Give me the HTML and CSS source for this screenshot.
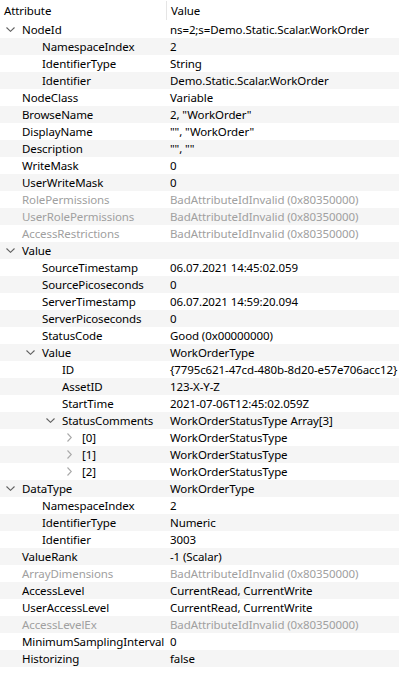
FILE: index.html
```html
<!DOCTYPE html>
<html>
<head>
<meta charset="utf-8">
<link rel="stylesheet" href="styles.css">
</head>
<body>
<div class="grid">
  <div class="head">
    <div class="hname">Attribute</div>
    <div class="hval">Value</div>
  </div>
  <div class="row"><div class="name l0"><span class="tw"><svg class="down" viewBox="0 0 9 5"><path d="M0.5 0.5 L4.5 4.3 L8.5 0.5"/></svg></span>NodeId</div><div class="val">ns=2;s=Demo.Static.Scalar.WorkOrder</div></div>
  <div class="row"><div class="name l1"><span class="tw"></span>NamespaceIndex</div><div class="val">2</div></div>
  <div class="row"><div class="name l1"><span class="tw"></span>IdentifierType</div><div class="val">String</div></div>
  <div class="row"><div class="name l1"><span class="tw"></span>Identifier</div><div class="val">Demo.Static.Scalar.WorkOrder</div></div>
  <div class="row"><div class="name l0"><span class="tw"></span>NodeClass</div><div class="val">Variable</div></div>
  <div class="row"><div class="name l0"><span class="tw"></span>BrowseName</div><div class="val">2, "WorkOrder"</div></div>
  <div class="row"><div class="name l0"><span class="tw"></span>DisplayName</div><div class="val">"", "WorkOrder"</div></div>
  <div class="row"><div class="name l0"><span class="tw"></span>Description</div><div class="val">"", ""</div></div>
  <div class="row"><div class="name l0"><span class="tw"></span>WriteMask</div><div class="val">0</div></div>
  <div class="row"><div class="name l0"><span class="tw"></span>UserWriteMask</div><div class="val">0</div></div>
  <div class="row dim"><div class="name l0"><span class="tw"></span>RolePermissions</div><div class="val">BadAttributeIdInvalid (0x80350000)</div></div>
  <div class="row dim"><div class="name l0"><span class="tw"></span>UserRolePermissions</div><div class="val">BadAttributeIdInvalid (0x80350000)</div></div>
  <div class="row dim"><div class="name l0"><span class="tw"></span>AccessRestrictions</div><div class="val">BadAttributeIdInvalid (0x80350000)</div></div>
  <div class="row"><div class="name l0"><span class="tw"><svg class="down" viewBox="0 0 9 5"><path d="M0.5 0.5 L4.5 4.3 L8.5 0.5"/></svg></span>Value</div><div class="val"></div></div>
  <div class="row"><div class="name l1"><span class="tw"></span>SourceTimestamp</div><div class="val">06.07.2021 14:45:02.059</div></div>
  <div class="row"><div class="name l1"><span class="tw"></span>SourcePicoseconds</div><div class="val">0</div></div>
  <div class="row"><div class="name l1"><span class="tw"></span>ServerTimestamp</div><div class="val">06.07.2021 14:59:20.094</div></div>
  <div class="row"><div class="name l1"><span class="tw"></span>ServerPicoseconds</div><div class="val">0</div></div>
  <div class="row"><div class="name l1"><span class="tw"></span>StatusCode</div><div class="val">Good (0x00000000)</div></div>
  <div class="row"><div class="name l1"><span class="tw"><svg class="down" viewBox="0 0 9 5"><path d="M0.5 0.5 L4.5 4.3 L8.5 0.5"/></svg></span>Value</div><div class="val">WorkOrderType</div></div>
  <div class="row"><div class="name l2"><span class="tw"></span>ID</div><div class="val">{7795c621-47cd-480b-8d20-e57e706acc12}</div></div>
  <div class="row"><div class="name l2"><span class="tw"></span>AssetID</div><div class="val">123-X-Y-Z</div></div>
  <div class="row"><div class="name l2"><span class="tw"></span>StartTime</div><div class="val">2021-07-06T12:45:02.059Z</div></div>
  <div class="row"><div class="name l2"><span class="tw"><svg class="down" viewBox="0 0 9 5"><path d="M0.5 0.5 L4.5 4.3 L8.5 0.5"/></svg></span>StatusComments</div><div class="val">WorkOrderStatusType Array[3]</div></div>
  <div class="row"><div class="name l3"><span class="tw"><svg class="right" viewBox="0 0 5 9"><path d="M0.5 0.5 L4.3 4.5 L0.5 8.5"/></svg></span>[0]</div><div class="val">WorkOrderStatusType</div></div>
  <div class="row"><div class="name l3"><span class="tw"><svg class="right" viewBox="0 0 5 9"><path d="M0.5 0.5 L4.3 4.5 L0.5 8.5"/></svg></span>[1]</div><div class="val">WorkOrderStatusType</div></div>
  <div class="row"><div class="name l3"><span class="tw"><svg class="right" viewBox="0 0 5 9"><path d="M0.5 0.5 L4.3 4.5 L0.5 8.5"/></svg></span>[2]</div><div class="val">WorkOrderStatusType</div></div>
  <div class="row"><div class="name l0"><span class="tw"><svg class="down" viewBox="0 0 9 5"><path d="M0.5 0.5 L4.5 4.3 L8.5 0.5"/></svg></span>DataType</div><div class="val">WorkOrderType</div></div>
  <div class="row"><div class="name l1"><span class="tw"></span>NamespaceIndex</div><div class="val">2</div></div>
  <div class="row"><div class="name l1"><span class="tw"></span>IdentifierType</div><div class="val">Numeric</div></div>
  <div class="row"><div class="name l1"><span class="tw"></span>Identifier</div><div class="val">3003</div></div>
  <div class="row"><div class="name l0"><span class="tw"></span>ValueRank</div><div class="val">-1 (Scalar)</div></div>
  <div class="row dim"><div class="name l0"><span class="tw"></span>ArrayDimensions</div><div class="val">BadAttributeIdInvalid (0x80350000)</div></div>
  <div class="row"><div class="name l0"><span class="tw"></span>AccessLevel</div><div class="val">CurrentRead, CurrentWrite</div></div>
  <div class="row"><div class="name l0"><span class="tw"></span>UserAccessLevel</div><div class="val">CurrentRead, CurrentWrite</div></div>
  <div class="row dim"><div class="name l0"><span class="tw"></span>AccessLevelEx</div><div class="val">BadAttributeIdInvalid (0x80350000)</div></div>
  <div class="row"><div class="name l0"><span class="tw"></span>MinimumSamplingInterval</div><div class="val">0</div></div>
  <div class="row"><div class="name l0"><span class="tw"></span>Historizing</div><div class="val">false</div></div>
</div>
</body>
</html>
```

FILE: styles.css
```css
html, body {
  margin: 0;
  padding: 0;
  background: #ffffff;
}
body {
  font-family: "Noto Sans", "Open Sans", sans-serif;
  font-size: 11.5px;
  letter-spacing: -0.1px;
  color: #000000;
}
.grid {
  display: flex;
  flex-direction: column;
}
.head {
  display: flex;
  height: 21px;
  align-items: center;
}
.hname {
  width: 162px;
  padding-left: 4px;
}
.hval {
  flex: 1;
  border-left: 1px solid #e5e5e5;
  padding-left: 4px;
  height: 19px;
  display: flex;
  align-items: center;
}
.row {
  display: flex;
  height: 17px;
  align-items: center;
  white-space: nowrap;
}
.row:nth-child(odd) {
  background: #f5f5f5;
}
.name {
  width: 168px;
  box-sizing: border-box;
  display: flex;
  align-items: center;
  padding-left: 2px;
  overflow: hidden;
}
.val {
  flex: 1;
  padding-left: 2px;
}
.dim {
  color: #a0a0a0;
}
.tw {
  width: 20px;
  height: 17px;
  flex: none;
  display: flex;
  align-items: center;
}
.l1 .tw { margin-left: 20px; }
.l2 .tw { margin-left: 40px; }
.l3 .tw { margin-left: 60px; }
.down {
  width: 9px;
  height: 5px;
  margin-left: 4px;
  fill: none;
  stroke: #606060;
  stroke-width: 1.1;
}
.right {
  width: 5px;
  height: 9px;
  margin-left: 5px;
  fill: none;
  stroke: #a8a8a8;
  stroke-width: 1.1;
}
```
